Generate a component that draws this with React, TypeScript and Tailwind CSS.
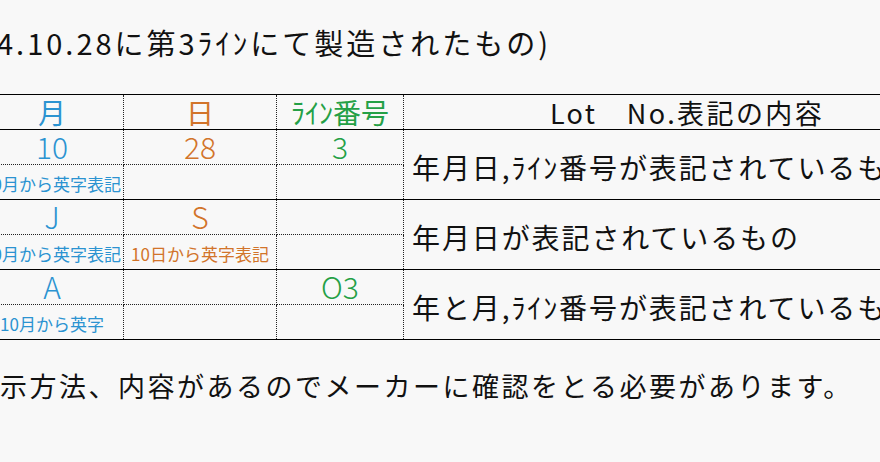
const font = { fontFamily: '"Noto Sans CJK JP", "Noto Sans", sans-serif' }

type Group = {
  month: string
  monthNote: string
  day: string
  dayNote: string
  line: string
  content: string
}

const groups: Group[] = [
  {
    month: "10",
    monthNote: "10月から英字表記",
    day: "28",
    dayNote: "",
    line: "3",
    content: "年月日,ﾗｲﾝ番号が表記されているもの",
  },
  {
    month: "J",
    monthNote: "10月から英字表記",
    day: "S",
    dayNote: "10日から英字表記",
    line: "",
    content: "年月日が表記されているもの",
  },
  {
    month: "A",
    monthNote: "10月から英字",
    day: "",
    dayNote: "",
    line: "O3",
    content: "年と月,ﾗｲﾝ番号が表記されているもの",
  },
]

const cell =
  "flex items-center justify-center leading-none whitespace-nowrap border-r border-dotted border-r-[#222]"
const top = `${cell} h-[35px] border-b border-b-[#222] pb-[2px] text-[30px] font-light`
const note = `${cell} h-[34px] pt-[3px] text-[17px]`

export default function App() {
  return (
    <div
      className="relative h-[462px] w-[880px] overflow-hidden bg-[#f8f8f8] text-[#111]"
      style={font}
    >
      {/* Title */}
      <div className="ml-[-3px] pt-[22px] text-[29px] leading-[40px] tracking-[3px] whitespace-nowrap">
        4.10.28に第3ﾗｲﾝにて製造されたもの)
      </div>

      {/* Table */}
      <div className="mt-[32px] ml-[-19px] w-[987px] border-t border-black">
        {/* Header */}
        <div className="grid grid-cols-[143px_153px_127px_564px] border-b border-black">
          <div className={`${cell} h-[34px] text-[28px] text-[#2b93d1]`}>月</div>
          <div className={`${cell} h-[34px] text-[28px] text-[#d2742a]`}>日</div>
          <div className={`${cell} h-[34px] text-[28px] text-[#24a046]`}>ﾗｲﾝ番号</div>
          <div className="flex h-[34px] items-center justify-center pl-[2px] text-[27px] leading-none tracking-[2.4px] whitespace-nowrap">
            Lot　No.表記の内容
          </div>
        </div>

        {groups.map((g) => (
          <div
            key={g.content}
            className="grid grid-cols-[143px_153px_127px_564px] border-b border-black"
          >
            <div className="flex flex-col">
              <div className={`${top} text-[#2b93d1]`}>{g.month}</div>
              <div className={`${note} text-[#2b93d1]`}>{g.monthNote}</div>
            </div>
            <div className="flex flex-col">
              <div className={`${top} text-[#d2742a]`}>{g.day}</div>
              <div className={`${note} text-[#d2742a]`}>{g.dayNote}</div>
            </div>
            <div className="flex flex-col">
              <div className={`${top} text-[#24a046]`}>{g.line}</div>
              <div className={note} />
            </div>
            <div className="flex h-[69px] items-center pt-[4px] pl-[8px] text-[28px] leading-none tracking-[1.9px] whitespace-nowrap">
              {g.content}
            </div>
          </div>
        ))}
      </div>

      {/* Footer note */}
      <div className="mt-[26px] text-[27px] leading-[40px] tracking-[2.5px] whitespace-nowrap">
        示方法、内容があるのでメーカーに確認をとる必要があります。
      </div>
    </div>
  )
}
